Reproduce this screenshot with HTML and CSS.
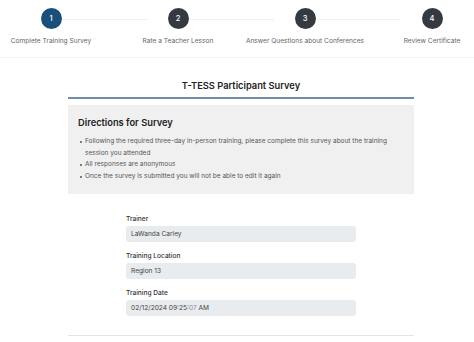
FILE: index.html
```html
<!DOCTYPE html>
<html>
<head>
<meta charset="utf-8">
<link rel="stylesheet" href="styles.css">
</head>
<body>
<div class="stepper-wrap">
  <div class="stepper">
    <div class="step active"><div class="circle">1</div><div class="label">Complete Training Survey</div></div>
    <div class="step"><div class="circle">2</div><div class="label">Rate a Teacher Lesson</div></div>
    <div class="step"><div class="circle">3</div><div class="label">Answer Questions about Conferences</div></div>
    <div class="step"><div class="circle">4</div><div class="label">Review Certificate</div></div>
  </div>
</div>
<main class="content">
  <h1 class="title">T-TESS Participant Survey</h1>
  <section class="directions">
    <h2>Directions for Survey</h2>
    <ul>
      <li>Following the required three-day in-person training, please complete this survey about the training session you attended</li>
      <li>All responses are anonymous</li>
      <li>Once the survey is submitted you will not be able to edit it again</li>
    </ul>
  </section>
  <form class="form">
    <div class="field">
      <label>Trainer</label>
      <div class="input">LaWanda Carley</div>
    </div>
    <div class="field">
      <label>Training Location</label>
      <div class="input">Region 13</div>
    </div>
    <div class="field">
      <label>Training Date</label>
      <div class="input">02/12/2024 09:25:<span class="sec">07</span> AM</div>
    </div>
  </form>
  <div class="bottom-rule"></div>
</main>
</body>
</html>
```
FILE: styles.css
```css
* { box-sizing: border-box; }
html, body { margin: 0; padding: 0; }
body {
  width: 474px;
  height: 342px;
  overflow: hidden;
  background: #fff;
  font-family: Inter, "Noto Sans", sans-serif;
  color: #212529;
}
.stepper-wrap {
  height: 58px;
  border-bottom: 1px solid #f3f3f3;
  overflow: hidden;
}
.stepper {
  display: grid;
  grid-template-columns: repeat(4, 127px);
  margin-left: -12.5px;
  padding-top: 8px;
}
.step {
  position: relative;
  display: flex;
  flex-direction: column;
  align-items: center;
}
.step::before {
  content: "";
  position: absolute;
  top: 11px;
  left: -53px;
  width: 85px;
  height: 1px;
  background: #f0f0f0;
}
.step:first-child::before { display: none; }
.circle {
  width: 21px;
  height: 21px;
  border-radius: 50%;
  background: #343a40;
  color: #fff;
  font-size: 7.5px;
  font-weight: 500;
  display: flex;
  align-items: center;
  justify-content: center;
}
.step.active .circle { background: #1b4f7b; }
.label {
  margin-top: 8px;
  font-size: 6.6px;
  color: #666;
  white-space: nowrap;
}
.content {
  width: 346px;
  margin-left: 68px;
}
.title {
  margin: 22px 0 0;
  text-align: center;
  font-size: 9.3px;
  font-weight: 600;
  color: #222;
  padding-bottom: 6px;
  border-bottom: 2px solid #6f8da5;
}
.directions {
  margin-top: 6px;
  background: #f0f0f0;
  padding: 12px 10px 14px;
  height: 89px;
}
.directions h2 {
  margin: 0;
  font-size: 9.3px;
  font-weight: 600;
  color: #222;
}
.directions ul {
  margin: 8px 0 0;
  padding-left: 7px;
  list-style: none;
}
.directions li {
  position: relative;
  font-size: 6.5px;
  line-height: 11.5px;
  color: #555;
}
.directions li::before {
  content: "";
  position: absolute;
  left: -5px;
  top: 5px;
  width: 2px;
  height: 2px;
  border-radius: 50%;
  background: #555;
}
.form {
  width: 230px;
  padding-top: 21px;
  padding-bottom: 9px;
  margin-left: 58px;
}
.field { margin-bottom: 10px; }
.field:last-child { margin-bottom: 0; }
.field label {
  display: block;
  font-size: 6.6px;
  font-weight: 500;
  color: #333;
  margin-bottom: 3px;
}
.input {
  height: 16px;
  line-height: 16px;
  background: #e9ecef;
  border-radius: 3px;
  font-size: 6.6px;
  color: #444;
  padding: 0 5px;
}
.sec { color: #8a9099; }
.bottom-rule {
  margin-top: 10px;
  height: 1px;
  background: #e4e4e4;
}
```
